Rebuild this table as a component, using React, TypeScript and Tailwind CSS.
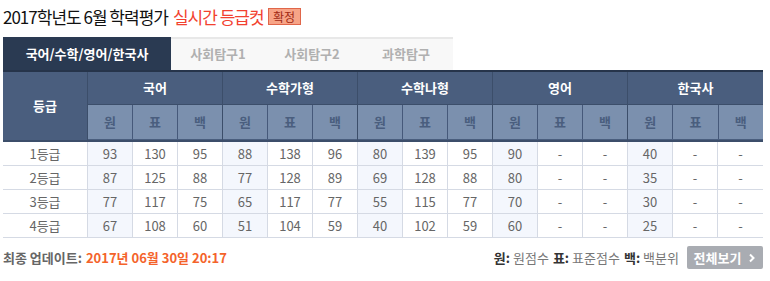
import React from "react";

const subjects = ["국어", "수학가형", "수학나형", "영어", "한국사"];
const rows: { g: string; v: string[] }[] = [
  { g: "1등급", v: ["93", "130", "95", "88", "138", "96", "80", "139", "95", "90", "-", "-", "40", "-", "-"] },
  { g: "2등급", v: ["87", "125", "88", "77", "128", "89", "69", "128", "88", "80", "-", "-", "35", "-", "-"] },
  { g: "3등급", v: ["77", "117", "75", "65", "117", "77", "55", "115", "77", "70", "-", "-", "30", "-", "-"] },
  { g: "4등급", v: ["67", "108", "60", "51", "104", "59", "40", "102", "59", "60", "-", "-", "25", "-", "-"] },
];
const subs = ["원", "표", "백"];

export default function App() {
  const font = { fontFamily: '"Noto Sans CJK KR", "Noto Sans", sans-serif' };
  return (
    <div className="w-[770px] h-[281px] bg-white pl-[3px] overflow-hidden" style={font}>
      {/* Title */}
      <div className="flex items-center h-[32px] pt-[1px]">
        <span className="text-[17px] tracking-[-1px] text-[#111] leading-none">2017학년도 6월 학력평가</span>
        <span className="text-[17px] tracking-[-1px] text-[#f2412f] leading-none ml-[5px]">실시간 등급컷</span>
        <span className="ml-[4px] h-[17px] w-[33px] flex items-center justify-center bg-[#f7a487] border border-[#e0664a] text-[12px] text-[#a02a14] leading-none">
          확정
        </span>
      </div>
      {/* Tabs */}
      <div className="flex mt-[5px] h-[33px]">
        <div className="w-[168px] bg-[#2a3a52] text-white text-[13px] font-bold flex items-center justify-center">
          국어/수학/영어/한국사
        </div>
        <div className="flex bg-[#f8f8f8] border-t-[2px] border-[#e8e8e8]">
          {["사회탐구1", "사회탐구2", "과학탐구"].map((t) => (
            <div key={t} className="w-[94px] flex items-center justify-center text-[13px] font-bold text-[#b0b0b0] pb-[2px]">
              {t}
            </div>
          ))}
        </div>
      </div>
      {/* Table */}
      <div className="w-[760px]">
        <div className="flex bg-[#4a5e7e] border-t-[2px] border-[#26344a]">
          <div className="w-[85px] h-[68px] flex items-center justify-center text-white text-[13px] font-bold border-r border-[#3c4e6a]">
            등급
          </div>
          {subjects.map((s, i) => (
            <div key={s} className={`w-[135px] flex flex-col ${i < 4 ? "border-r border-[#3c4e6a]" : ""}`}>
              <div className="h-[33px] flex items-center justify-center text-white text-[13px] font-bold border-b border-[#3c4e6a]">
                {s}
              </div>
              <div className="flex h-[34px] bg-[#7b90ae]">
                {subs.map((u, j) => (
                  <div
                    key={u}
                    className={`flex-1 flex items-center justify-center text-[13px] font-bold text-[#4a5e7e] ${j < 2 ? "border-r border-[#46597a]" : ""}`}
                  >
                    {u}
                  </div>
                ))}
              </div>
            </div>
          ))}
        </div>
        <div className="border-t-[2px] border-[#3c4e6a]">
          {rows.map((r) => (
            <div key={r.g} className="flex h-[24px] border-b border-[#d5dae4]">
              <div className="w-[85px] flex items-center justify-center text-[13px] text-[#666] border-r border-[#d5dae4]">
                {r.g}
              </div>
              {r.v.map((v, k) => (
                <div
                  key={k}
                  className={`w-[45px] flex items-center justify-center text-[13px] text-[#666] ${k % 3 === 0 ? "bg-[#f4f7fd]" : ""} ${k < 14 ? "border-r border-[#d5dae4]" : ""}`}
                >
                  {v}
                </div>
              ))}
            </div>
          ))}
        </div>
      </div>
      {/* Footer */}
      <div className="flex items-center w-[760px] mt-[8px] h-[23px]">
        <span className="text-[13px] font-bold text-[#666]">최종 업데이트:</span>
        <span className="text-[13px] font-bold text-[#f4632a] ml-[4px]">2017년 06월 30일 20:17</span>
        <div className="ml-auto flex items-center text-[13px] text-[#777]">
          <b className="text-[#333]">원:</b>
          <span className="ml-[3px]">원점수</span>
          <b className="text-[#333] ml-[4px]">표:</b>
          <span className="ml-[3px]">표준점수</span>
          <b className="text-[#333] ml-[4px]">백:</b>
          <span className="ml-[3px]">백분위</span>
          <div className="ml-[8px] w-[76px] h-[23px] bg-[#a9acb2] rounded-[2px] flex items-center justify-center text-white font-bold text-[13px]">
            전체보기
            <svg width="8" height="10" viewBox="0 0 8 10" className="ml-[7px]">
              <path d="M2 1.5 L5.5 5 L2 8.5" stroke="white" strokeWidth="2" fill="none" />
            </svg>
          </div>
        </div>
      </div>
    </div>
  );
}
